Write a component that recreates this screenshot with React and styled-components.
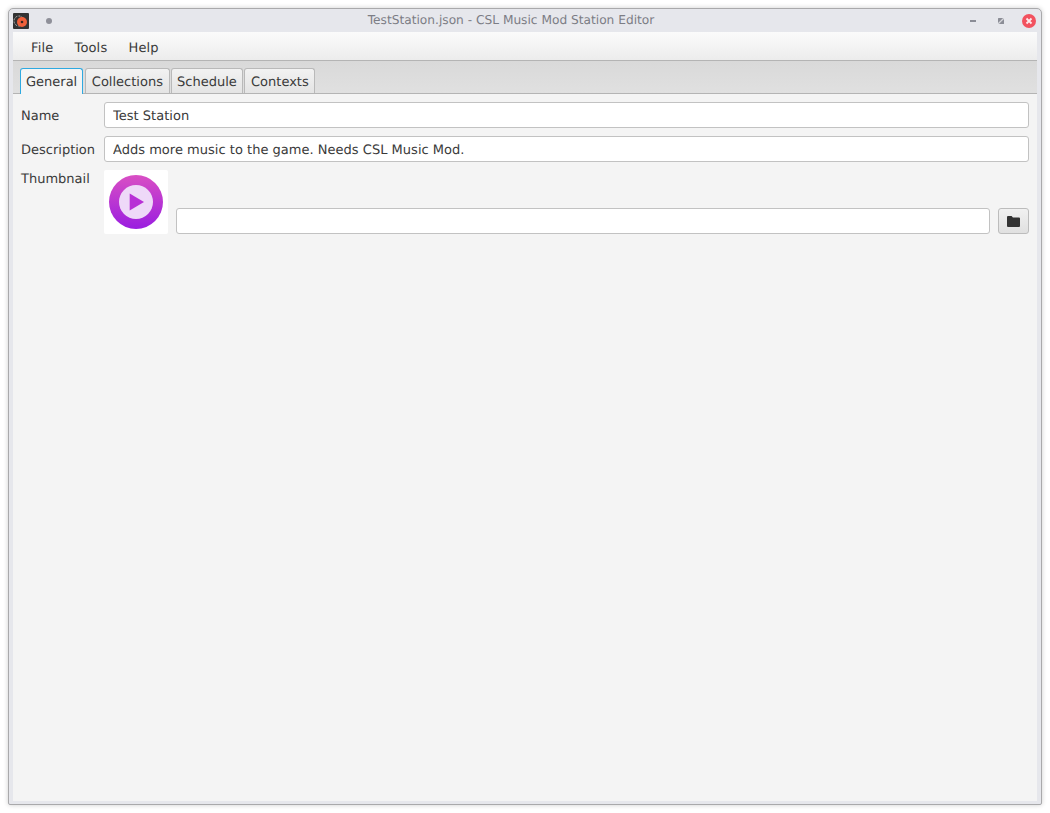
import styled, { createGlobalStyle } from "styled-components";

const GlobalStyle = createGlobalStyle`
  html, body {
    margin: 0;
    padding: 0;
    background: #ffffff;
  }
  body {
    font-family: "DejaVu Sans", sans-serif;
    font-size: 13px;
    color: #3a3a3a;
    text-rendering: geometricPrecision;
  }
`;

const App = () => {
  return (
    <>
      <GlobalStyle />
      <Page>
        <Window>
          <TitleBar>
            <AppIcon viewBox="0 0 16 16">
              <rect width="16" height="16" rx="1" fill="#333333" />
              <circle cx="6" cy="8" r="5" fill="none" stroke="#b8b8b8" strokeWidth="1" strokeDasharray="2 1.2" />
              <circle cx="9" cy="9" r="5" fill="#f0603a" />
              <circle cx="9" cy="9" r="1.3" fill="#3a2520" />
            </AppIcon>
            <StickyDot />
            <Title>TestStation.json - CSL Music Mod Station Editor</Title>
            <WindowButtons>
              <MinimizeIcon viewBox="0 0 6 2">
                <rect width="6" height="2" fill="#8b8d96" />
              </MinimizeIcon>
              <RestoreIcon viewBox="0 0 6 6">
                <rect width="6" height="6" rx="0.5" fill="#8b8d96" />
                <path d="M0 6L6 0" stroke="#d6d7dc" strokeWidth="1.3" />
              </RestoreIcon>
              <CloseIcon viewBox="0 0 14 14">
                <circle cx="7" cy="7" r="7" fill="#f2525f" />
                <path d="M4.5 4.5L9.5 9.5M9.5 4.5L4.5 9.5" stroke="#ffeaec" strokeWidth="1.8" />
              </CloseIcon>
            </WindowButtons>
          </TitleBar>
          <Client>
            <MenuBar>
              <MenuItem>File</MenuItem>
              <MenuItem>Tools</MenuItem>
              <MenuItem>Help</MenuItem>
            </MenuBar>
            <TabBar>
              <Tab $active>General</Tab>
              <Tab>Collections</Tab>
              <Tab>Schedule</Tab>
              <Tab>Contexts</Tab>
            </TabBar>
            <Content>
              <FieldLabel>Name</FieldLabel>
              <TextInput readOnly value="Test Station" />
              <FieldLabel>Description</FieldLabel>
              <TextInput readOnly value="Adds more music to the game. Needs CSL Music Mod." />
              <ThumbLabel>Thumbnail</ThumbLabel>
              <ThumbRow>
                <Thumbnail>
                  <svg width="54" height="54" viewBox="0 0 54 54">
                    <defs>
                      <linearGradient id="disc" x1="0" y1="0" x2="0" y2="1">
                        <stop offset="0" stopColor="#d94fc4" />
                        <stop offset="1" stopColor="#9a1de0" />
                      </linearGradient>
                    </defs>
                    <circle cx="27" cy="27" r="27" fill="url(#disc)" />
                    <circle cx="27" cy="27" r="17" fill="#eed9f8" />
                    <path d="M20.7 18.5L35 27L20.7 35.5Z" fill="#b82fd6" />
                  </svg>
                </Thumbnail>
                <PathInput readOnly value="" />
                <BrowseButton>
                  <svg width="13" height="11" viewBox="0 0 13 11">
                    <path
                      d="M1 0h3.6l1.3 1.5H12a1 1 0 0 1 1 1V10a1 1 0 0 1-1 1H1a1 1 0 0 1-1-1V1a1 1 0 0 1 1-1Z"
                      fill="#333333"
                    />
                  </svg>
                </BrowseButton>
              </ThumbRow>
            </Content>
          </Client>
        </Window>
      </Page>
    </>
  );
};

//Styled Components

const Page = styled.div`
  width: 1050px;
  height: 813px;
  padding: 8px;
  box-sizing: border-box;
  overflow: hidden;
`;

const Window = styled.div`
  width: 1034px;
  height: 797px;
  box-sizing: border-box;
  display: flex;
  flex-direction: column;
  background: #e6e7ec;
  border: 1px solid #a9a9ab;
  border-radius: 5px 5px 2px 2px;
  box-shadow: 0 0 5px rgba(0, 0, 0, 0.2);
  padding: 0 4px 3px 4px;
`;

const TitleBar = styled.div`
  position: relative;
  height: 23px;
  flex: none;
  display: flex;
  align-items: center;
  color: #7c7d85;
`;

const AppIcon = styled.svg`
  width: 16px;
  height: 16px;
  flex: none;
`;

const StickyDot = styled.span`
  width: 6px;
  height: 6px;
  margin-left: 17px;
  border-radius: 50%;
  background: #8f9099;
`;

const Title = styled.div`
  position: absolute;
  left: 0;
  right: 28px;
  top: 0;
  text-align: center;
  font-size: 12.2px;
  line-height: 23px;
`;

const WindowButtons = styled.div`
  display: flex;
  align-items: center;
  margin-left: auto;
  margin-right: 1px;
`;

const MinimizeIcon = styled.svg`
  width: 6px;
  height: 2px;
  margin-right: 22px;
`;

const RestoreIcon = styled.svg`
  width: 6px;
  height: 6px;
  margin-right: 18px;
`;

const CloseIcon = styled.svg`
  width: 14px;
  height: 14px;
`;

const Client = styled.div`
  flex: 1;
  min-height: 0;
  display: flex;
  flex-direction: column;
  background: #f4f4f4;
`;

const MenuBar = styled.div`
  height: 29px;
  flex: none;
  box-sizing: border-box;
  display: flex;
  align-items: center;
  padding: 5px 0 0 7.4px;
  background: linear-gradient(to bottom, #fbfbfb, #ececec);
  border-bottom: 1px solid #b4b4b4;
`;

const MenuItem = styled.div`
  padding: 0 10.6px;
  letter-spacing: 0.15px;
  line-height: 24px;
`;

const TabBar = styled.div`
  height: 33px;
  flex: none;
  box-sizing: border-box;
  display: flex;
  align-items: flex-end;
  gap: 1px;
  padding: 0 0 0 7px;
  background: linear-gradient(to bottom, #d9d9d9, #e0e0e0);
  border-bottom: 1px solid #b4b4b4;
`;

const Tab = styled.div`
  height: ${(props) => (props.$active ? "26px" : "25px")};
  box-sizing: border-box;
  padding: 0 ${(props) => (props.$active ? "5px" : "5.6px")};
  margin-right: ${(props) => (props.$active ? "1px" : "0")};
  margin-bottom: ${(props) => (props.$active ? "-1px" : "0")};
  line-height: ${(props) => (props.$active ? "27px" : "28px")};
  border: 1px solid ${(props) => (props.$active ? "#2fa9e0" : "#b9b9b9")};
  border-bottom: ${(props) => (props.$active ? "none" : "0")};
  border-radius: 3px 3px 0 0;
  background: ${(props) =>
    props.$active ? "#f4f4f4" : "linear-gradient(to bottom, #f2f2f2, #e4e4e4)"};
`;

const Content = styled.div`
  display: grid;
  grid-template-columns: 83px 1fr;
  grid-template-rows: 26px 26px auto;
  row-gap: 8px;
  padding: 8px 8px 0 8px;
`;

const FieldLabel = styled.div`
  padding-top: 2px;
  line-height: 26px;
`;

const ThumbLabel = styled(FieldLabel)`
  padding-top: 1px;
  line-height: 18px;
`;

const TextInput = styled.input`
  box-sizing: border-box;
  width: 100%;
  height: 26px;
  padding: 2px 8px 0 8px;
  font: 13px "DejaVu Sans", sans-serif;
  letter-spacing: 0.02px;
  text-rendering: geometricPrecision;
  color: #3a3a3a;
  background: #ffffff;
  border: 1px solid #c2c2c2;
  border-radius: 3px;
  outline: none;
`;

const ThumbRow = styled.div`
  display: flex;
  align-items: flex-end;
  gap: 8px;
`;

const Thumbnail = styled.div`
  width: 64px;
  height: 64px;
  flex: none;
  display: flex;
  align-items: center;
  justify-content: center;
  background: #ffffff;
  border-radius: 2px;
`;

const PathInput = styled(TextInput)`
  flex: 1;
  width: auto;
  min-width: 0;
`;

const BrowseButton = styled.div`
  width: 31px;
  height: 26px;
  flex: none;
  box-sizing: border-box;
  display: flex;
  align-items: center;
  justify-content: center;
  border: 1px solid #bcbcbc;
  border-radius: 3px;
  background: linear-gradient(to bottom, #f1f1f1, #e0e0e0);
`;

export default App;
